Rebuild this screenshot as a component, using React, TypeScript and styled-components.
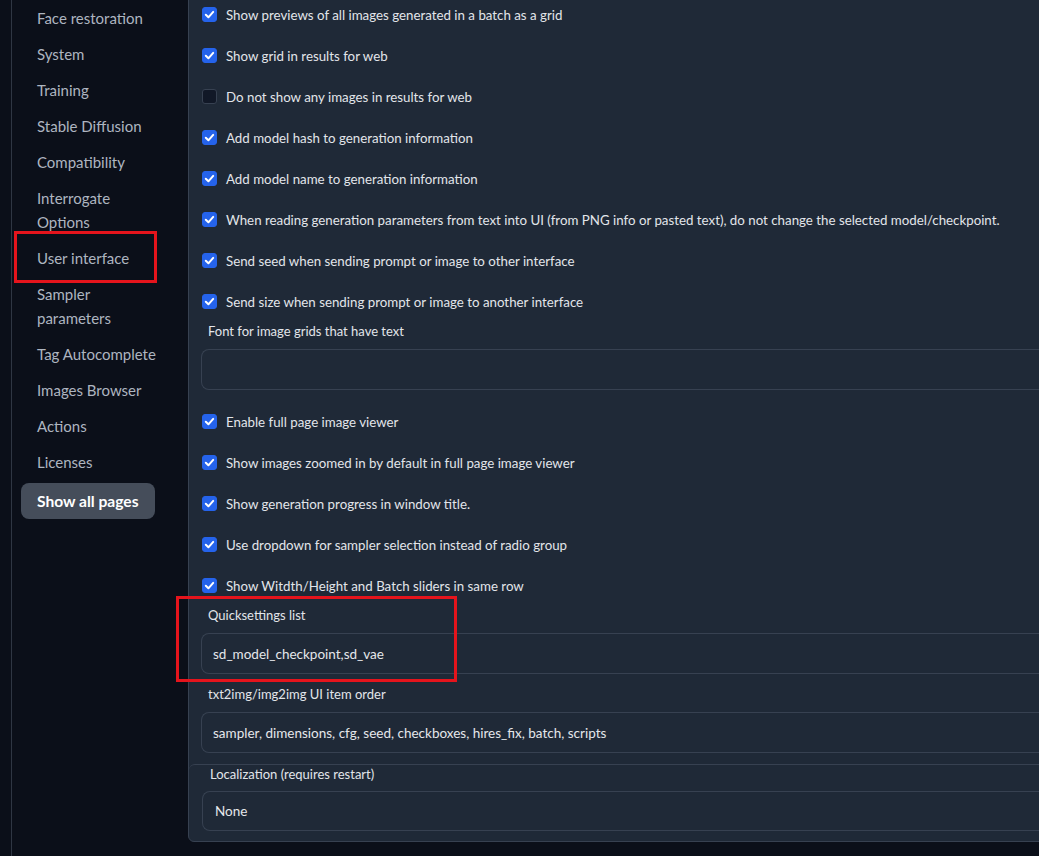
import styled, { createGlobalStyle, css } from "styled-components";

const GlobalStyle = createGlobalStyle`
  html, body {
    margin: 0;
    padding: 0;
    background: #0b0f19;
  }
  body {
    font-family: "Lato", "Noto Sans", sans-serif;
    color: #e5e7eb;
  }
`;

type NavItem = { lines: string[]; marked?: boolean };

const navItems: NavItem[] = [
  { lines: ["Face restoration"] },
  { lines: ["System"] },
  { lines: ["Training"] },
  { lines: ["Stable Diffusion"] },
  { lines: ["Compatibility"] },
  { lines: ["Interrogate", "Options"] },
  { lines: ["User interface"], marked: true },
  { lines: ["Sampler", "parameters"] },
  { lines: ["Tag Autocomplete"] },
  { lines: ["Images Browser"] },
  { lines: ["Actions"] },
  { lines: ["Licenses"] },
];

type Setting =
  | { kind: "check"; label: string; checked: boolean }
  | { kind: "text"; label: string; value: string; marked?: boolean };

const settings: Setting[] = [
  { kind: "check", label: "Show previews of all images generated in a batch as a grid", checked: true },
  { kind: "check", label: "Show grid in results for web", checked: true },
  { kind: "check", label: "Do not show any images in results for web", checked: false },
  { kind: "check", label: "Add model hash to generation information", checked: true },
  { kind: "check", label: "Add model name to generation information", checked: true },
  {
    kind: "check",
    label:
      "When reading generation parameters from text into UI (from PNG info or pasted text), do not change the selected model/checkpoint.",
    checked: true,
  },
  { kind: "check", label: "Send seed when sending prompt or image to other interface", checked: true },
  { kind: "check", label: "Send size when sending prompt or image to another interface", checked: true },
  { kind: "text", label: "Font for image grids that have text", value: "" },
  { kind: "check", label: "Enable full page image viewer", checked: true },
  { kind: "check", label: "Show images zoomed in by default in full page image viewer", checked: true },
  { kind: "check", label: "Show generation progress in window title.", checked: true },
  { kind: "check", label: "Use dropdown for sampler selection instead of radio group", checked: true },
  { kind: "check", label: "Show Witdth/Height and Batch sliders in same row", checked: true },
  { kind: "text", label: "Quicksettings list", value: "sd_model_checkpoint,sd_vae", marked: true },
  {
    kind: "text",
    label: "txt2img/img2img UI item order",
    value: "sampler, dimensions, cfg, seed, checkboxes, hires_fix, batch, scripts",
  },
];

function CheckMark() {
  return (
    <svg width="15" height="15" viewBox="0 0 15 15">
      <polyline
        points="3.8,7.8 6.4,10.3 11.2,4.9"
        fill="none"
        stroke="#ffffff"
        strokeWidth="2"
        strokeLinecap="round"
        strokeLinejoin="round"
      />
    </svg>
  );
}

function App() {
  return (
    <>
      <GlobalStyle />
      <Page>
        <Sidebar>
          {navItems.map((item, i) => (
            <NavLink key={i} $marked={item.marked}>
              {item.lines.map((line, j) => (
                <span key={j}>{line}</span>
              ))}
            </NavLink>
          ))}
          <ShowAll>Show all pages</ShowAll>
        </Sidebar>
        <Panel>
          <Section>
            {settings.map((s, i) =>
              s.kind === "check" ? (
                <CheckRow key={i}>
                  <Box $checked={s.checked}>{s.checked && <CheckMark />}</Box>
                  <CheckLabel>{s.label}</CheckLabel>
                </CheckRow>
              ) : (
                <Field key={i} $marked={s.marked}>
                  <FieldLabel>{s.label}</FieldLabel>
                  <Input>{s.value}</Input>
                </Field>
              )
            )}
          </Section>
          <SubBlock>
            <FieldLabel $indent={8}>Localization (requires restart)</FieldLabel>
            <Select>None</Select>
          </SubBlock>
        </Panel>
      </Page>
    </>
  );
}

export default App;

const redBox = css`
  content: "";
  position: absolute;
  border: 3px solid #e5141c;
  pointer-events: none;
`;

const Page = styled.div`
  display: flex;
  align-items: flex-start;
  height: 856px;
  overflow: hidden;
  background: #0b0f19;
`;

const Sidebar = styled.nav`
  width: 176px;
  height: 100%;
  margin-left: 11px;
  border-left: 1px solid #2f3643;
  flex-shrink: 0;
  display: flex;
  flex-direction: column;
  align-items: flex-start;
`;

const NavLink = styled.div<{ $marked?: boolean }>`
  position: relative;
  align-self: stretch;
  padding: 6px 0 6px 25px;
  font-size: 15px;
  line-height: 24px;
  color: #aeb5c0;
  display: flex;
  flex-direction: column;
  white-space: nowrap;

  ${({ $marked }) =>
    $marked &&
    css`
      &::after {
        ${redBox}
        top: -9px;
        bottom: -7px;
        left: 2px;
        right: 31px;
      }
    `}
`;

const ShowAll = styled.div`
  margin: 3px 0 0 9px;
  height: 36px;
  padding: 0 16px;
  display: flex;
  align-items: center;
  border-radius: 8px;
  background: #454d5a;
  color: #ffffff;
  font-size: 15.6px;
  font-weight: 700;
`;

const Panel = styled.main`
  flex: 1;
  margin: -9px -30px 0 0;
  height: 851px;
  box-sizing: border-box;
  background: #1f2937;
  border: 1px solid #374151;
  border-radius: 0 0 0 6px;
  display: flex;
  flex-direction: column;
`;

const Section = styled.div`
  padding: 2px 0 0 12px;
`;

const CheckRow = styled.label`
  display: flex;
  align-items: center;
  gap: 9px;
  height: 41px;
  padding-left: 1px;
`;

const Box = styled.span<{ $checked: boolean }>`
  width: 15px;
  height: 15px;
  box-sizing: border-box;
  border-radius: 3px;
  flex-shrink: 0;
  display: flex;
  background: ${({ $checked }) => ($checked ? "#2563eb" : "#111827")};
  border: 1px solid ${({ $checked }) => ($checked ? "#2563eb" : "#374151")};
  svg {
    margin: -1px;
  }
`;

const CheckLabel = styled.span`
  font-size: 13.3px;
  color: #e2e5ea;
  white-space: nowrap;
`;

const Field = styled.div<{ $marked?: boolean }>`
  position: relative;
  padding-bottom: 11px;

  ${({ $marked }) =>
    $marked &&
    css`
      &::after {
        ${redBox}
        top: -10px;
        bottom: 3px;
        left: -25px;
        width: 275px;
      }
    `}
`;

const FieldLabel = styled.div<{ $indent?: number }>`
  height: 18px;
  line-height: 18px;
  padding-left: ${({ $indent }) => $indent ?? 7}px;
  font-size: 13px;
  color: #e2e5ea;
  margin-bottom: 9px;
`;

const Input = styled.div`
  height: 41px;
  box-sizing: border-box;
  border: 1px solid #374151;
  border-right: none;
  border-radius: 8px 0 0 8px;
  padding-left: 11px;
  display: flex;
  align-items: center;
  font-size: 13.5px;
  color: #e5e7eb;
  white-space: nowrap;
`;

const SubBlock = styled.div`
  border-top: 1px solid #374151;
  border-top-left-radius: 6px;
  padding: 0 0 9px 13px;

  ${FieldLabel} {
    margin-bottom: 8px;
  }
`;

const Select = styled(Input)`
  height: 40px;
  padding-left: 12px;
`;
